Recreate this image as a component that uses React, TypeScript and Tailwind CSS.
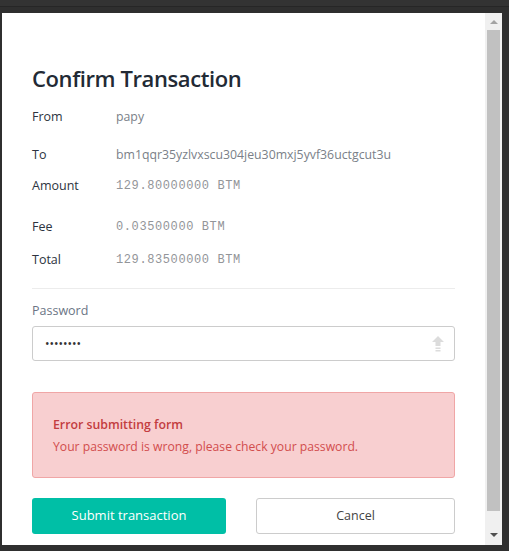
import React from "react";

const rows = [
  { label: "From", value: "papy", mono: false, mt: "mt-[13px]" },
  { label: "To", value: "bm1qqr35yzlvxscu304jeu30mxj5yvf36uctgcut3u", mono: false, mt: "mt-[18px]" },
  { label: "Amount", value: "129.80000000 BTM", mono: true, mt: "mt-[11px]" },
  { label: "Fee", value: "0.03500000 BTM", mono: true, mt: "mt-[21px]" },
  { label: "Total", value: "129.83500000 BTM", mono: true, mt: "mt-[13px]" },
];

function Row({ r }: { r: (typeof rows)[number] }) {
  return (
    <div className={`flex h-5 items-center ${r.mt}`}>
      <div className="w-[84px] text-[12.5px] text-[#2d3340]">{r.label}</div>
      {r.mono ? (
        <div className="font-['Liberation_Mono',monospace] text-[12px] tracking-[0.6px] text-[#939599]">
          {r.value}
        </div>
      ) : (
        <div className="text-[12.3px] text-[#7a7f88]">{r.value}</div>
      )}
    </div>
  );
}

function KeyIcon() {
  return (
    <svg width="12" height="16" viewBox="0 0 12 16" className="text-[#dcdcdc]">
      <path d="M6 0 L12 6 H8.5 V10 H3.5 V6 H0 Z" fill="currentColor" />
      <rect x="3.5" y="11.5" width="5" height="1.5" fill="currentColor" />
      <rect x="3.5" y="14" width="5" height="1.5" fill="currentColor" />
    </svg>
  );
}

function Scrollbar() {
  return (
    <div className="flex h-full w-[17px] flex-col items-center bg-[#f0f0f0]">
      <div className="flex h-[17px] w-full items-center justify-center">
        <div className="h-0 w-0 border-x-[4px] border-b-[4px] border-x-transparent border-b-[#a3a3a3]" />
      </div>
      <div className="h-[481px] w-[13px] bg-[#c1c1c1]" />
      <div className="flex flex-1 items-end justify-center pb-[8px]">
        <div className="h-0 w-0 border-x-[4px] border-t-[4px] border-x-transparent border-t-[#505050]" />
      </div>
    </div>
  );
}

export default function App() {
  return (
    <div className="h-[551px] w-full overflow-hidden bg-[#2f2f2f] font-['Open_Sans','Noto_Sans',sans-serif]">
      <div className="h-[7px] border-b border-[#262626] bg-[#333333]" />
      <div className="flex pl-[2px] pt-[6px]">
        <div className="flex h-[532px]">
          <div className="w-[483px] bg-white px-[30px] pt-[49px]">
            <h1 className="h-8 text-[22px] font-semibold leading-8 tracking-[-0.4px] text-[#222a35]">
              Confirm Transaction
            </h1>

            {rows.map((r) => (
              <Row key={r.label} r={r} />
            ))}

            <div className="mt-[18px] h-px bg-[#ececec]" />

            <div className="mt-[12px] flex h-5 items-center text-[12.5px] text-[#6b7585]">Password</div>

            <div className="mt-[5px] flex h-[35px] items-center justify-between rounded-[3px] border border-[#cccccc] pl-[12px] pr-[10px]">
              <span className="text-[12px] text-[#333]">••••••••</span>
              <KeyIcon />
            </div>

            <div className="mt-[31px] h-[86px] rounded-[3px] border border-[#f0a6a6] bg-[#f8cfd0] px-5 pt-[22px]">
              <div className="flex h-5 items-center text-[12.3px] font-semibold text-[#c33d3f]">
                Error submitting form
              </div>
              <div className="mt-[2px] flex h-5 items-center text-[12.2px] text-[#d24d4d]">
                Your password is wrong, please check your password.
              </div>
            </div>

            <div className="mt-[20px] flex justify-between">
              <button className="h-9 w-[194px] rounded-[3px] bg-[#00bfa6] text-[13px] text-white">
                Submit transaction
              </button>
              <button className="h-9 w-[199px] rounded-[3px] border border-[#cccccc] bg-white text-[12.5px] text-[#444]">
                Cancel
              </button>
            </div>
          </div>
          <Scrollbar />
        </div>
      </div>
    </div>
  );
}
